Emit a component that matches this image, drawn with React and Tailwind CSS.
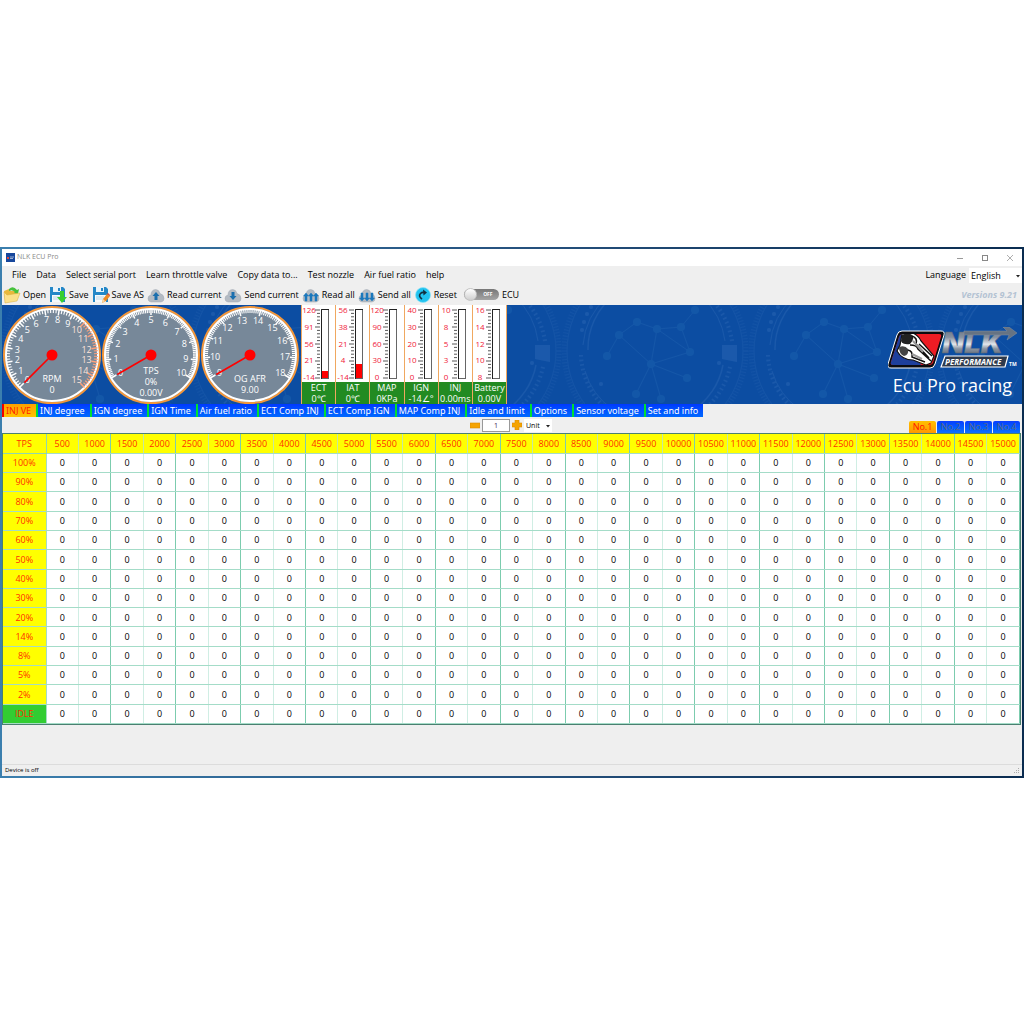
import React, { useState } from "react";

const menus = [
  "File",
  "Data",
  "Select serial port",
  "Learn throttle valve",
  "Copy data to...",
  "Test nozzle",
  "Air fuel ratio",
  "help",
];

const tabs = [
  "INJ VE",
  "INJ degree",
  "IGN degree",
  "IGN Time",
  "Air fuel ratio",
  "ECT Comp INJ",
  "ECT Comp IGN",
  "MAP Comp INJ",
  "Idle and limit",
  "Options",
  "Sensor voltage",
  "Set and info",
];

const bars = [
  { name: "ECT", value: "0℃", scale: ["126", "91", "56", "21", "-14"], fill: 7 },
  { name: "IAT", value: "0℃", scale: ["56", "38", "21", "4", "-14"], fill: 14 },
  { name: "MAP", value: "0KPa", scale: ["120", "90", "60", "30", "0"], fill: 0 },
  { name: "IGN", value: "-14∠°", scale: ["40", "30", "20", "10", "0"], fill: 0 },
  { name: "INJ", value: "0.00ms", scale: ["10", "8", "5", "3", "0"], fill: 0 },
  { name: "Battery", value: "0.00V", scale: ["16", "14", "12", "10", "8"], fill: 0 },
];

const rpms = Array.from({ length: 30 }, (_, i) => (i + 1) * 500);
const throttle = [
  "100%", "90%", "80%", "70%", "60%", "50%", "40%",
  "30%", "20%", "14%", "8%", "5%", "2%", "IDLE",
];

const polar = (angle, r) => {
  const a = (angle * Math.PI) / 180;
  return [50 + r * Math.sin(a), 50 - r * Math.cos(a)];
};

const Gauge = ({ from, to, start, sweep, minor, warn = Infinity, lines, textY }) => {
  const count = to - from;
  const ticks = Array.from({ length: count * minor + 1 }, (_, i) => i);
  const numbers = Array.from({ length: count + 1 }, (_, i) => from + i);
  const [nx, ny] = polar(start, 39);

  return (
    <svg viewBox="0 0 99 99" className="w-[99px] h-[99px] shrink-0" fontFamily="Open Sans, sans-serif">
      <circle cx="50" cy="50" r="48" fill="#778899" stroke="#f2963a" strokeWidth="2" />
      <circle cx="50" cy="50" r="46" fill="none" stroke="#fff" strokeWidth="2" />
      {ticks.map((i) => {
        const angle = start + (i / (count * minor)) * sweep;
        const major = i % minor === 0;
        const [x1, y1] = polar(angle, 46);
        const [x2, y2] = polar(angle, major ? 40 : 42);
        return (
          <line
            key={i}
            x1={x1}
            y1={y1}
            x2={x2}
            y2={y2}
            stroke={from + i / minor >= warn ? "#ffa07a" : "#fff"}
            strokeWidth={major ? 1.5 : 1.1}
          />
        );
      })}
      {numbers.map((n, i) => {
        const [x, y] = polar(start + (i / count) * sweep, 35);
        return (
          <text
            key={n}
            x={x}
            y={y + 3}
            fontSize="9"
            textAnchor="middle"
            fill={n >= warn ? "#ffe4da" : "#fff"}
          >
            {n}
          </text>
        );
      })}
      {lines.map((line, i) => (
        <text key={i} x="50" y={textY + i * 11} fontSize="9" textAnchor="middle" fill="#fff">
          {line}
        </text>
      ))}
      <line x1="50" y1="50" x2={nx} y2={ny} stroke="#f00" strokeWidth="1.6" />
      <circle cx="50" cy="50" r="5.5" fill="#f00" />
    </svg>
  );
};

const BarMeter = ({ name, value, scale, fill }) => (
  <div className="flex-1 flex flex-col border-l border-[#f0a860]">
    <svg
      viewBox="0 0 33 77"
      className="w-full h-[77px] bg-white"
      fontFamily="Open Sans, sans-serif"
      preserveAspectRatio="xMinYMin meet"
    >
      {scale.map((s, i) => (
        <text key={i} x="7" y={8 + i * 16.75} fontSize="8" textAnchor="middle" fill="#f01838">
          {s}
        </text>
      ))}
      {Array.from({ length: 21 }, (_, i) => (
        <line
          key={i}
          x1={i % 5 === 0 ? 13 : 15}
          x2="18"
          y1={5 + i * 3.4}
          y2={5 + i * 3.4}
          stroke="#444"
          strokeWidth="0.9"
        />
      ))}
      <rect x="19.5" y="4.5" width="7" height="69" fill="#fff" stroke="#666" />
      <path d="M19.5 74V4.5H27" fill="none" stroke="#222" />
      <rect x="20" y={73 - fill} width="6" height={fill} fill="#f00" />
    </svg>
    <div className="bg-[#228b22] text-white text-[9px] leading-[11px] text-center whitespace-nowrap">
      <div>{name}</div>
      <div>{value}</div>
    </div>
  </div>
);

const BannerPattern = () => (
  <svg className="absolute inset-0 w-full h-full" aria-hidden="true">
    <defs>
      <pattern id="tech" x="-1" y="0" width="187" height="99" patternUnits="userSpaceOnUse">
        <g fill="none" stroke="#2a66b3" opacity="0.45">
          <circle cx="93" cy="46" r="91" strokeWidth="5" strokeDasharray="1 2" opacity="0.5" />
          <circle cx="93" cy="46" r="88" strokeWidth="0.6" />
          <path d="M21 40A72 72 0 0 1 45 -8M23 66A72 72 0 0 0 50 104M163 36A72 72 0 0 0 140 -8" strokeWidth="1" />
          <path d="M26 45A68 68 0 0 1 50 -8M161 60A70 70 0 0 1 130 106" strokeWidth="1.4" />
          <path d="M19 50A76 76 0 0 0 52 110M170 36A78 78 0 0 0 145 -10M168 62A78 78 0 0 1 138 108" strokeWidth="4" strokeDasharray="1.6 3" />
        </g>
        <path d="M160 40H175V57L160 54Z" fill="#2a66b3" opacity="0.5" />
        <g fill="#2a66b3" opacity="0.5">
          <circle cx="20" cy="25" r="2" />
          <circle cx="22" cy="17" r="2" />
          <circle cx="25" cy="9" r="2" />
          <circle cx="29" cy="2" r="2" />
          <circle cx="39" cy="79" r="2" />
          <circle cx="157" cy="58" r="2" />
        </g>
        <path
          d="M45 51L57 30L75 17L95 24L119 22L133 5M119 22L128 47L89 59L57 30M95 24L89 59L125 73M95 24L128 47M89 59L74 89M89 59L99 94"
          fill="none"
          stroke="#185aab"
          strokeWidth="0.7"
        />
        <g fill="#1357a8">
          <circle cx="45" cy="51" r="4" />
          <circle cx="57" cy="30" r="4" />
          <circle cx="75" cy="17" r="4" />
          <circle cx="95" cy="24" r="4" />
          <circle cx="119" cy="22" r="4" />
          <circle cx="133" cy="5" r="4" />
          <circle cx="128" cy="47" r="4" />
          <circle cx="89" cy="59" r="4" />
          <circle cx="125" cy="73" r="4" />
          <circle cx="74" cy="89" r="4" />
          <circle cx="99" cy="94" r="4" />
        </g>
      </pattern>
    </defs>
    <rect width="100%" height="100%" fill="url(#tech)" />
  </svg>
);

const Logo = () => (
  <svg viewBox="0 0 130 44" className="w-[130px] h-[44px]" role="img" aria-label="NLK Performance">
    <defs>
      <linearGradient id="steel" x1="0" y1="0" x2="0" y2="1">
        <stop offset="0" stopColor="#5b6878" />
        <stop offset="0.35" stopColor="#8791a0" />
        <stop offset="0.55" stopColor="#e3e7ec" />
        <stop offset="0.68" stopColor="#8993a1" />
        <stop offset="1" stopColor="#3c4654" />
      </linearGradient>
      <clipPath id="badge">
        <path d="M15 7H51Q54 7 53 10L45 36Q44 38 41 38H5Q2 38 3 35L11 10Q12 7 15 7Z" />
      </clipPath>
    </defs>
    {/* badge with the two exhaust pipes */}
    <path
      d="M14 4H53Q57 4 56 8L47 37Q46 41 42 41H3Q-1 41 0 37L9 8Q10 4 14 4Z"
      fill="#0b0b10"
      stroke="#fff"
      strokeWidth="1"
    />
    <g clipPath="url(#badge)">
      <path d="M0 0H60V44H0Z" fill="#ed1c24" />
      <path d="M0 0H14L36 44H0Z" fill="#1e3f9c" />
      <path d="M14 7L25 6Q31 9 33 14L46 29L43 36L38 38L25 33Q14 33 9 24L12 18Z" fill="#fff" stroke="#111" strokeWidth="1.2" />
      <path d="M14 8Q20 5 24 8Q27 12 22 17Q15 18 13 14Z" fill="#222" />
      <path d="M11 20Q17 18 20 22Q21 28 16 29Q11 27 11 20Z" fill="#444" />
      <path d="M24 9Q30 11 28 17L41 31M22 18Q29 18 30 22L43 34M20 23Q25 24 24 30L37 35M31 17L44 29" fill="none" stroke="#111" strokeWidth="1.5" />
      <path d="M25 14L35 25M24 27L34 32" stroke="#999" strokeWidth="2" />
    </g>
    <text
      x="54"
      y="26"
      fontFamily="Inter, sans-serif"
      fontSize="29"
      fontWeight="900"
      fontStyle="italic"
      fill="url(#steel)"
      stroke="#5c6878"
      strokeWidth="0.4"
    >
      NLK
    </text>
    <path d="M76 4H119L115 0L121 0L129 6L119 13L121 8H76Z" fill="#667383" stroke="#8793a3" strokeWidth="0.5" />
    <path d="M57 29H120L117 40H53Z" fill="#2e3a4c" stroke="#fff" strokeWidth="1.2" />
    <text x="57" y="38" fontFamily="Open Sans, sans-serif" fontSize="8" fontWeight="700" fontStyle="italic" fill="#fff">
      PERFORMANCE
    </text>
    <text x="121" y="39" fontFamily="Open Sans, sans-serif" fontSize="5" fontWeight="700" fill="#fff">
      TM
    </text>
  </svg>
);

const FolderIcon = () => (
  <svg viewBox="0 0 18 18" className="w-[18px] h-[18px]">
    <path d="M1 5L6 3L8 5L14 4V15H2Z" fill="#e8b93c" />
    <path d="M6 3Q10 -1 14 4L16 3L15 8L11 7L12 6Q9 3 6 5Z" fill="#46c23c" />
    <path d="M4 9L17 7L14 15L2 17L1 6Z" fill="#fbe18a" stroke="#d9ae3a" strokeWidth="0.5" />
  </svg>
);

const Floppy = ({ children }) => (
  <svg viewBox="0 0 18 18" className="w-[18px] h-[18px]">
    <path d="M1 1H14L16 3V16H1Z" fill="#2487c7" />
    <rect x="4" y="1" width="8" height="5" fill="#e9f3fa" />
    <rect x="9" y="2" width="2" height="3" fill="#2487c7" />
    <rect x="3" y="9" width="11" height="7" fill="#f5f9fc" />
    <path d="M4 11H12M4 13H12" stroke="#a9c6da" strokeWidth="0.7" />
    {children}
  </svg>
);

const SaveIcon = () => (
  <Floppy>
    <path d="M11 5H15V11H18L13 17L8 11H11Z" fill="#37cf2e" />
  </Floppy>
);

const SaveAsIcon = () => (
  <Floppy>
    <path d="M10 17L11 13L15 8L18 10L14 15Z" fill="#f08a24" />
    <path d="M15 8L16 7L18 9L18 10Z" fill="#d4372c" />
    <path d="M10 17L11 13L13 15Z" fill="#f7d9a8" />
  </Floppy>
);

const Cloud = ({ children }) => (
  <svg viewBox="0 0 18 18" className="w-[18px] h-[18px]">
    <path
      d="M4 16Q1 15.500 1 12.500Q1 9.500 4 9Q4 4 8.500 3.500Q12 3.500 13 7.500Q17 8.500 17 12.500Q17 15.500 14 16Z"
      fill="#b4bbc3"
      stroke="#a1a9b2"
      strokeWidth="0.5"
    />
    {children}
  </svg>
);

const CloudUp = () => (
  <Cloud>
    <path d="M9 6L12.500 10H10.500V14H7.500V10H5.500Z" fill="#1b6fae" />
  </Cloud>
);

const CloudDown = () => (
  <Cloud>
    <path d="M9 14L12.500 10H10.500V6H7.500V10H5.500Z" fill="#1b6fae" />
  </Cloud>
);

const CloudsUp = () => (
  <Cloud>
    <path
      d="M4 7L6.500 10H5V15H3V10H1.500ZM9 7L11.500 10H10V15H8V10H6.500ZM14 7L16.500 10H15V15H13V10H11.500Z"
      fill="#1b78bd"
      stroke="#1b78bd"
      strokeWidth="0.5"
    />
  </Cloud>
);

const CloudsDown = () => (
  <Cloud>
    <path
      d="M4 15L6.500 12H5V7H3V12H1.500ZM9 15L11.500 12H10V7H8V12H6.500ZM14 15L16.500 12H15V7H13V12H11.500Z"
      fill="#1b78bd"
      stroke="#1b78bd"
      strokeWidth="0.5"
    />
  </Cloud>
);

const ResetIcon = () => (
  <svg viewBox="0 0 18 18" className="w-[18px] h-[18px]">
    <circle cx="9" cy="9" r="7.500" fill="#22c3f0" stroke="#8be2f7" strokeWidth="0.7" />
    <path d="M8 13Q4 10 6.500 7.500Q8 6 10 6.500" fill="none" stroke="#12303f" strokeWidth="1.7" />
    <path d="M9 3.500L13 6.500L9.500 9.500Z" fill="#12303f" />
  </svg>
);

const tools = [
  { label: "Open", Icon: FolderIcon },
  { label: "Save", Icon: SaveIcon },
  { label: "Save AS", Icon: SaveAsIcon },
  { label: "Read current", Icon: CloudUp },
  { label: "Send current", Icon: CloudDown },
  { label: "Read all", Icon: CloudsUp },
  { label: "Send all", Icon: CloudsDown },
  { label: "Reset", Icon: ResetIcon },
];

const TitleBar = () => (
  <div className="h-[17px] flex items-center bg-white pl-1 pr-2 text-[7px] text-[#8a8a8a]">
    <div className="w-[9px] h-[9px] bg-[#17479c] flex items-center justify-center">
      <svg viewBox="0 0 9 9" className="w-[9px] h-[9px]">
        <path d="M1 4H3V6H1Z" fill="#e0483c" />
        <path d="M4 4H8M4 5.500H7" stroke="#d5dcec" strokeWidth="0.7" />
      </svg>
    </div>
    <span className="ml-[2px]">NLK ECU Pro</span>
    <div className="ml-auto flex items-center gap-[17px]">
      <button aria-label="Minimize">
        <svg viewBox="0 0 8 8" className="w-2 h-2">
          <path d="M1 4.500H7" stroke="#999" />
        </svg>
      </button>
      <button aria-label="Maximize">
        <svg viewBox="0 0 8 8" className="w-2 h-2">
          <rect x="1.500" y="1.500" width="5" height="5" fill="none" stroke="#888" />
        </svg>
      </button>
      <button aria-label="Close">
        <svg viewBox="0 0 8 8" className="w-2 h-2">
          <path d="M1 1L7 7M7 1L1 7" stroke="#999" strokeWidth="0.8" />
        </svg>
      </button>
    </div>
  </div>
);

const App = () => {
  const [tab, setTab] = useState("INJ VE");
  const [page, setPage] = useState(1);
  const [step, setStep] = useState(1);
  const [ecuOn, setEcuOn] = useState(false);

  return (
    <div className="min-h-screen flex flex-col justify-center bg-white pt-px font-['Open_Sans',sans-serif] text-[9px] text-black">
      <div className="p-0.5 bg-linear-to-r from-[#3b7fae] via-[#26527f] to-[#0a2c50]">
        <div className="bg-[#efefef]">
          <TitleBar />

          {/* Menu */}
          <div className="h-[18px] flex items-center justify-between pl-[10px]">
            <nav className="flex gap-[10px]">
              {menus.map((m) => (
                <button key={m} className="whitespace-nowrap">
                  {m}
                </button>
              ))}
            </nav>
            <div className="flex items-center gap-[3px]">
              <label htmlFor="language">Language</label>
              <div className="relative flex">
                <select
                  id="language"
                  className="appearance-none w-[53px] h-[15px] bg-white pl-[2px] text-[9px] leading-[13px]"
                >
                  <option>English</option>
                </select>
                <svg viewBox="0 0 4 3" className="absolute right-[2px] top-[7px] w-1 h-[3px] pointer-events-none">
                  <path d="M0 0H4L2 2.500Z" fill="#222" />
                </svg>
              </div>
            </div>
          </div>

          {/* Toolbar */}
          <div className="h-[21px] flex items-center gap-[3px] pl-px pr-[5px]">
            {tools.map(({ label, Icon }) => (
              <button key={label} className="flex items-center gap-[2px] whitespace-nowrap">
                <Icon />
                {label}
              </button>
            ))}
            <button
              role="switch"
              aria-checked={ecuOn}
              aria-labelledby="ecu-label"
              onClick={() => setEcuOn(!ecuOn)}
              className="w-[35px] h-[11px] ml-1 rounded-full bg-linear-to-b from-[#777] to-[#a5a5a5] flex items-center"
            >
              <span className="w-[13px] h-[13px] shrink-0 rounded-full border border-[#c4c4c4] bg-linear-to-b from-white to-[#cfcfcf]"></span>
              <span className="flex-1 text-[5px] font-bold text-white text-center">{ecuOn ? "ON" : "OFF"}</span>
            </button>
            <span id="ecu-label">ECU</span>
            <span className="ml-auto font-bold italic text-[#b4c3d3]">Versions 9.21</span>
          </div>

          {/* Banner with gauges */}
          <div className="relative bg-[#0c4da2] flex justify-between overflow-hidden">
            <BannerPattern />
            <div className="relative flex">
              <Gauge from={0} to={15} start={225} sweep={270} minor={5} warn={10} lines={["RPM", "0"]} textY={77} />
              <Gauge from={0} to={10} start={240} sweep={240} minor={10} lines={["TPS", "0%", "0.00V"]} textY={69} />
              <Gauge from={9} to={18} start={240} sweep={240} minor={10} lines={["OG AFR", "9.00"]} textY={77} />
              <div className="w-[208px] pl-[2px] flex">
                <div className="flex-1 flex border-r border-[#f0a860]">
                  {bars.map((b) => (
                    <BarMeter key={b.name} {...b} />
                  ))}
                </div>
              </div>
            </div>
            <div className="relative flex flex-col items-end pt-[22px] pr-1">
              <Logo />
              <h1 className="pr-[6px] text-[18px] leading-[28px] text-white">Ecu Pro racing</h1>
            </div>
          </div>

          {/* Tabs */}
          <div className="flex font-['Noto_Sans',sans-serif]">
            {tabs.map((t) => (
              <button
                key={t}
                onClick={() => setTab(t)}
                className={`h-[13px] pl-[2px] pr-[5px] border-l-2 leading-[13px] whitespace-nowrap ${
                  t === tab
                    ? "border-[#f00000] bg-linear-to-b from-[#ffa000] to-[#ffc400] text-[#ff2000]"
                    : "border-[#00e030] bg-linear-to-b from-[#0038ff] to-[#0068ff] text-white"
                }`}
              >
                {t}
              </button>
            ))}
          </div>

          {/* Step and map selection */}
          <div className="h-4 flex items-center">
            <div className="flex-1"></div>
            <div className="flex items-center gap-[2px]">
              <button aria-label="Decrease" onClick={() => setStep(step - 1)}>
                <svg viewBox="0 0 10 10" className="w-[10px] h-[10px]">
                  <rect y="3" width="10" height="5" fill="#f5a300" stroke="#d98a00" strokeWidth="0.6" />
                </svg>
              </button>
              <input
                aria-label="Step"
                value={step}
                onChange={(e) => setStep(Number(e.target.value) || 0)}
                className="w-7 h-[13px] border border-[#999] bg-white text-center text-[7px] text-[#402050]"
              />
              <button aria-label="Increase" onClick={() => setStep(step + 1)}>
                <svg viewBox="0 0 10 10" className="w-[10px] h-[10px]">
                  <path d="M3 0H7V3H10V7H7V10H3V7H0V3H3Z" fill="#f5a300" stroke="#d98a00" strokeWidth="0.6" />
                </svg>
              </button>
              <div className="relative flex">
                <select
                  aria-label="Unit"
                  className="appearance-none w-7 h-[13px] bg-white pl-[2px] text-[7px] leading-[13px]"
                >
                  <option>Unit</option>
                </select>
                <svg viewBox="0 0 4 3" className="absolute right-[2px] top-[6px] w-1 h-[3px] pointer-events-none">
                  <path d="M0 0H4L2 2.500Z" fill="#222" />
                </svg>
              </div>
            </div>
            <div className="flex-1 flex justify-end gap-px self-end pr-[2px]">
              {[1, 2, 3, 4].map((n) => (
                <button
                  key={n}
                  onClick={() => setPage(n)}
                  className={`w-[27px] h-3 rounded-t-[2px] leading-3 ${
                    n === page
                      ? "bg-linear-to-b from-[#ffc000] to-[#ff9800] text-[#ff1000]"
                      : "bg-linear-to-b from-[#0a3cff] to-[#1070ff] text-[#5a6884]"
                  }`}
                >
                  No.{n}
                </button>
              ))}
            </div>
          </div>

          {/* Fuel map */}
          <div className="border border-[#4a8070] mr-px">
            <table className="w-full table-fixed border-collapse bg-white text-center h-[290px]">
              <tbody>
                <tr className="h-[19px] bg-[#ffff00] text-[#ff3000]">
                  <th scope="col" className="w-[43px] p-0 font-normal border-r border-b border-[#8fd6b0]">
                    TPS
                  </th>
                  {rpms.map((rpm, i) => (
                    <th
                      key={rpm}
                      scope="col"
                      className={`p-0 font-normal border-r border-b border-b-[#a4dcc8] ${
                        i % 2 ? "border-r-[#7cccae]" : "border-r-[#c4e8a0]"
                      }`}
                    >
                      {rpm}
                    </th>
                  ))}
                </tr>
                {throttle.map((t) => (
                  <tr key={t} className="h-[19px]">
                    <th
                      scope="row"
                      className={`p-0 font-normal border-r border-b border-[#a4dcc4] text-[#ff3000] ${
                        t === "IDLE" ? "bg-[#32cd32]" : "bg-[#ffff00]"
                      }`}
                    >
                      {t}
                    </th>
                    {rpms.map((rpm, i) => (
                      <td
                        key={rpm}
                        className={`p-0 border-r border-b border-b-[#a4dcc8] ${
                          i % 2 ? "border-r-[#7cccae]" : "border-r-[#d0eee4]"
                        }`}
                      >
                        0
                      </td>
                    ))}
                  </tr>
                ))}
              </tbody>
            </table>
          </div>

          <div className="h-[39px]"></div>

          {/* Status bar */}
          <div className="h-3 flex items-center justify-between border-t border-[#dcdcdc] pl-[3px] pr-[2px] text-[6px]">
            <span>Device is off</span>
            <svg viewBox="0 0 6 6" className="w-[6px] h-[6px]" fill="#aaa">
              <path d="M4 0H5V1H4ZM2 2H3V3H2ZM4 2H5V3H4ZM0 4H1V5H0ZM2 4H3V5H2ZM4 4H5V5H4Z" />
            </svg>
          </div>
        </div>
      </div>
    </div>
  );
};

export default App;
